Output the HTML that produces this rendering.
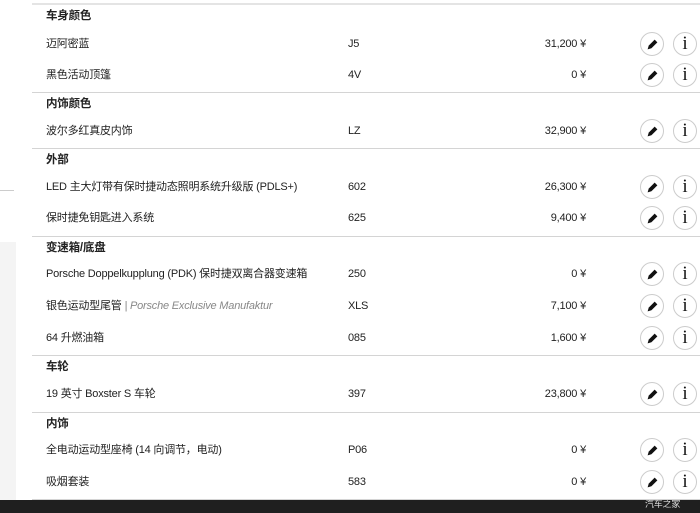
<!DOCTYPE html><html><head><meta charset="utf-8"><style>
body{margin:0;width:700px;height:513px;background:#fff;position:relative;overflow:hidden;font-family:"Liberation Sans","Noto Sans CJK SC",sans-serif;color:#222}
.a{position:absolute;white-space:nowrap;font-size:11px;line-height:14px;letter-spacing:-0.2px}
.h{font-weight:bold;font-size:11.5px}
.l{position:absolute;left:32px;width:668px;height:1px;background:#d4d4d4}
.p{text-align:right;width:120px;left:466px}
.c{position:absolute;width:24px;height:24px;border:1px solid #ccc;border-radius:50%;box-sizing:border-box;background:#fff}
.c svg{position:absolute;left:5px;top:5px}
.i{font-family:"Liberation Serif",serif;font-size:19px;line-height:22px;text-align:center;color:#111}
</style></head><body>
<div style="position:absolute;left:0;top:242px;width:16px;height:258px;background:#f4f4f4"></div>
<div style="position:absolute;left:0;top:190px;width:14px;height:1px;background:#ccc"></div>
<div class="l" style="top:3px;height:2px;background:#e4e4e4"></div>
<div style="position:absolute;left:0;top:500px;width:700px;height:13px;background:#1f1f1f"></div>
<div class="a" style="left:645px;top:497px;color:#ddd;font-size:9px">汽车之家</div>
<div id="c"></div>
<script>
var rows=[
['h','车身颜色',16],['r','迈阿密蓝',44,'J5','31,200 ¥'],['r','黑色活动顶篷',75,'4V','0 ¥'],['l',92],
['h','内饰颜色',104],['r','波尔多红真皮内饰',131,'LZ','32,900 ¥'],['l',148],
['h','外部',160],['r','LED 主大灯带有保时捷动态照明系统升级版 (PDLS+)',187,'602','26,300 ¥'],['r','保时捷免钥匙进入系统',218,'625','9,400 ¥'],['l',236],
['h','变速箱/底盘',248],['r','Porsche Doppelkupplung (PDK) 保时捷双离合器变速箱',274,'250','0 ¥'],['r','银色运动型尾管 <span style="color:#888;font-style:italic">| Porsche Exclusive Manufaktur</span>',306,'XLS','7,100 ¥'],['r','64 升燃油箱',338,'085','1,600 ¥'],['l',355],
['h','车轮',367],['r','19 英寸 Boxster S 车轮',394,'397','23,800 ¥'],['l',412],
['h','内饰',424],['r','全电动运动型座椅 (14 向调节，电动)',450,'P06','0 ¥'],['r','吸烟套装',482,'583','0 ¥'],['l',499]];
var s='';
rows.forEach(function(r){
if(r[0]=='l'){s+='<div class="l" style="top:'+r[1]+'px"></div>';return;}
if(r[0]=='h'){s+='<div class="a h" style="left:46px;top:'+(r[2]-7)+'px">'+r[1]+'</div>';return;}
var y=r[2]-7;
s+='<div class="a" style="left:46px;top:'+y+'px">'+r[1]+'</div>';
s+='<div class="a" style="left:348px;top:'+y+'px">'+r[3]+'</div>';
s+='<div class="a p" style="top:'+y+'px">'+r[4]+'</div>';
s+='<div class="c" style="left:640px;top:'+(r[2]-12)+'px"><svg width="13" height="13" viewBox="0 0 12 12"><path d="M1.5 10.5 L2.5 7 L8 1.5 L10.5 4 L5 9.5 Z" fill="#111"/></svg></div>';
s+='<div class="c i" style="left:673px;top:'+(r[2]-12)+'px">i</div>';
});
document.getElementById('c').innerHTML=s;
</script>
</body></html>
